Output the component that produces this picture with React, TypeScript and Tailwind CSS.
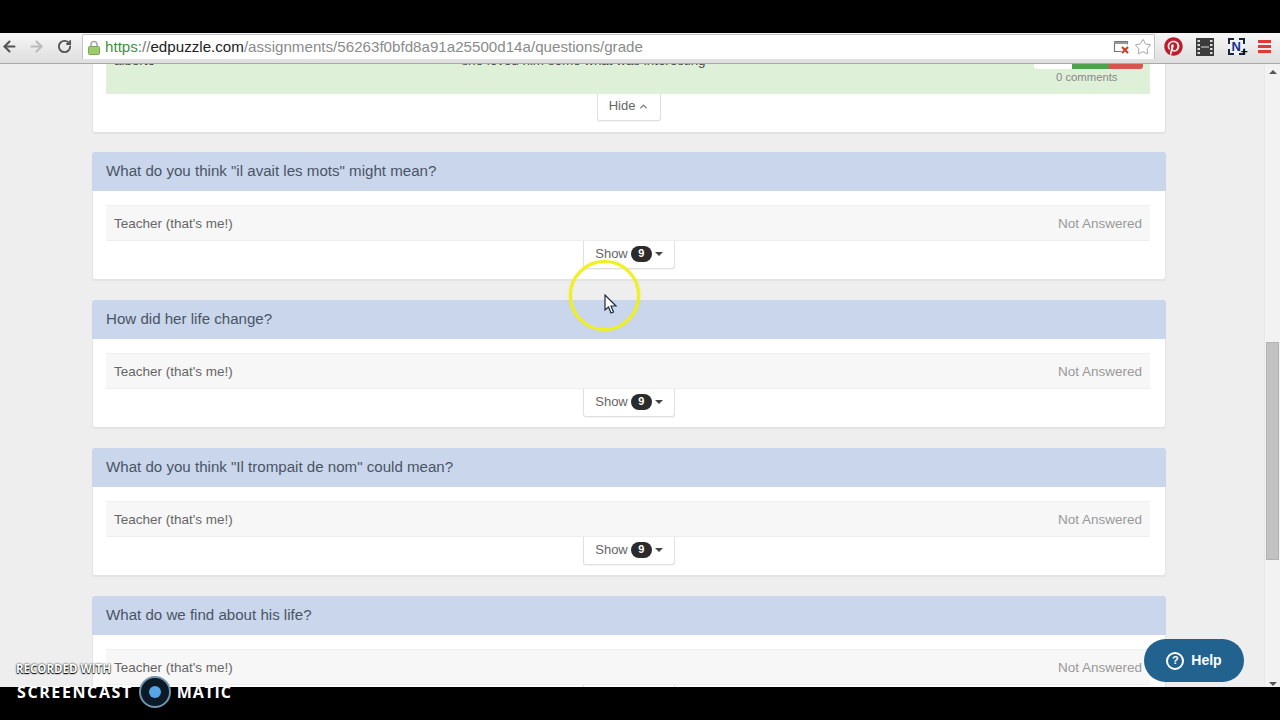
import { ArrowLeft, ArrowRight, RotateCw, Star, ChevronUp } from "lucide-react";
import { FaPinterest } from "react-icons/fa";

const questions = [
  'What do you think "il avait les mots" might mean?',
  "How did her life change?",
  'What do you think "Il trompait de nom" could mean?',
  "What do we find about his life?",
];

function Toolbar() {
  return (
    <div className="flex h-[31px] shrink-0 items-start border-b border-[#a8a8a8] bg-gradient-to-b from-[#f6f6f6] to-[#dedede] pt-[1px]">
      <div className="flex h-[25px] w-[82px] shrink-0 items-center gap-[10px] pl-[1px]">
        <ArrowLeft size={17} strokeWidth={3} className="text-[#555]" />
        <ArrowRight size={17} strokeWidth={3} className="text-[#bbb]" />
        <RotateCw size={15} strokeWidth={3} className="ml-[2px] text-[#555]" />
      </div>
      <div className="flex h-[25px] w-[1073px] shrink-0 items-center rounded-t-[2px] border border-b-0 border-[#c4c4c4] bg-white pr-[2px] pl-[5px] text-[15.15px]">
        <svg width="12" height="15" viewBox="0 0 12 15" className="mr-[5px] shrink-0">
          <path d="M3 7V4.5a3 3 0 0 1 6 0V7" fill="none" stroke="#a9a9a9" strokeWidth="1.6" />
          <rect x="0.5" y="6.5" width="11" height="8" rx="1" fill="#9ccb6a" stroke="#7ea84f" />
        </svg>
        <span className="text-[#3f8f45]">https:</span>
        <span className="text-[#777]">//</span>
        <span className="text-[#222]">edpuzzle.com</span>
        <span className="text-[#8b8b8b]">/assignments/56263f0bfd8a91a25500d14a/questions/grade</span>
        <div className="ml-auto flex items-center gap-[3px]">
          <svg width="18" height="16" viewBox="0 0 18 16">
            <path d="M1.5 2.5h13v3M1.5 2.5v10h7" fill="none" stroke="#777" strokeWidth="1.2" />
            <path d="M1.5 3h13v2h-13z" fill="#999" />
            <path d="M9 8l6 6M15 8l-6 6" stroke="#cf3a22" strokeWidth="2" />
          </svg>
          <Star size={18} strokeWidth={1.2} className="text-[#999]" />
        </div>
      </div>
      <div className="flex h-[25px] flex-1 items-center justify-between pr-[9px] pl-[9px]">
        <FaPinterest size={19} className="text-[#bd1c2b]" />
        <svg width="18" height="18" viewBox="0 0 18 18">
          <rect width="18" height="18" fill="#3c3c3c" />
          <path d="M1.5 2h2.5v2h-2.500zM1.500 6h2.500v2h-2.500zM1.500 10h2.500v2h-2.500zM1.500 14h2.500v2h-2.500zM14 2h2.500v2H14zM14 6h2.500v2H14zM14 10h2.500v2H14zM14 14h2.500v2H14z" fill="#ddd" />
          <path d="M5 9h8" stroke="#ddd" strokeWidth="1" />
        </svg>
        <div className="relative flex h-[17px] w-[17px] items-center justify-center border-2 border-dashed border-[#1d2433] bg-[#eef1f8] text-[13px] leading-none font-bold text-[#12308c]">
          N
          <span className="absolute -right-[5px] -bottom-[5px] text-[12px] leading-none font-bold text-[#111]">+</span>
        </div>
        <div className="flex w-[13px] flex-col gap-[2px]">
          <div className="h-[3px] bg-[#e0393a]" />
          <div className="h-[3px] bg-[#e0393a]" />
          <div className="h-[3px] bg-[#e0393a]" />
        </div>
      </div>
    </div>
  );
}

function FirstCard() {
  return (
    <div className="rounded-b-[3px] border border-t-0 border-[#e2e2e2] bg-white pr-[13px] pb-[11px] pl-[13px] shadow-[0_1px_1px_rgba(0,0,0,0.05)]">
      <div className="mr-[2px] flex h-[50px] justify-between bg-[#dff0d8] pr-[7px] pl-[8px] text-[13.4px] text-[#444]">
        <span className="pt-[7px]">alberto</span>
        <span className="pt-[7px] pr-[22px]">she loved him some what was interesting</span>
        <div className="flex w-[109px] flex-col">
          <div className="mt-[15px] flex h-[10px] w-full overflow-hidden rounded-b-[3px]">
            <div className="w-[38px] bg-white" />
            <div className="w-[37px] bg-[#4ea24f]" />
            <div className="flex-1 bg-[#d9534f]" />
          </div>
          <span className="pt-[1px] pl-[22px] text-[11.3px] leading-[14px] text-[#888]">0 comments</span>
        </div>
      </div>
      <div className="mx-auto flex h-[27px] w-fit items-center gap-[3px] rounded-b-[3px] border border-t-0 border-[#e0e0e0] bg-white px-[11px] pb-[2px] text-[13px] text-[#666] shadow-[0_1px_1px_rgba(0,0,0,0.05)]">
        Hide
        <ChevronUp size={11} strokeWidth={3} className="text-[#777]" />
      </div>
    </div>
  );
}

function QuestionCard({ title }: { title: string }) {
  return (
    <div className="rounded-[3px] border border-[#e4e4e4] bg-white shadow-[0_1px_1px_rgba(0,0,0,0.05)]">
      <div className="-mx-[1px] -mt-[1px] flex h-[39px] items-center rounded-t-[3px] bg-[#c9d6ec] px-[14px] text-[15.1px] text-[#4a5564]">
        {title}
      </div>
      <div className="px-[13px] pt-[14px] pb-[10px]">
        <div className="mr-[2px] flex h-[36px] items-center justify-between border-y border-[#eeeeee] bg-[#f7f7f7] px-[8px] pt-[3px] text-[13.5px]">
          <span className="text-[#666]">Teacher (that's me!)</span>
          <span className="text-[#999]">Not Answered</span>
        </div>
        <div className="mx-auto flex h-[28px] w-fit items-center gap-[3px] rounded-b-[3px] border border-t-0 border-[#e0e0e0] bg-white px-[11px] pb-[2px] text-[13px] text-[#666] shadow-[0_1px_1px_rgba(0,0,0,0.05)]">
          Show
          <span className="flex h-[16px] w-[21px] items-center justify-center rounded-full bg-[#2b2b2b] text-[11px] font-bold text-white">
            9
          </span>
          <span className="h-0 w-0 border-x-[4px] border-t-[4px] border-x-transparent border-t-[#444]" />
        </div>
      </div>
    </div>
  );
}

function Scrollbar() {
  return (
    <div className="flex w-[16px] shrink-0 flex-col items-center border-l border-[#e8e8e8] bg-[#f2f2f2]">
      <span className="mt-[6px] h-0 w-0 border-x-[4px] border-b-[4px] border-x-transparent border-b-[#555]" />
      <div className="mt-[268px] h-[218px] w-[13px] border border-[#b2b2b2] bg-[#c2c2c2]" />
      <span className="mt-auto mb-[1px] h-0 w-0 border-x-[4px] border-t-[4px] border-x-transparent border-t-[#555]" />
    </div>
  );
}

function Watermark() {
  return (
    <div className="absolute bottom-[18px] left-[16px] font-['Open_Sans',sans-serif] text-white">
      <div className="text-[11.5px] leading-[14px] font-bold [text-shadow:0_0_2px_#000,0_1px_1px_#000]">
        RECORDED WITH
      </div>
      <div className="mt-[6px] flex items-center pl-[1px] text-[16px] leading-[20px] font-bold tracking-[1.6px]">
        SCREENCAST
        <svg width="36" height="36" viewBox="0 0 36 36" className="mx-[4px] -my-[8px]">
          <circle cx="18" cy="18" r="15" fill="#0b1a26" stroke="#6f93ad" strokeWidth="2" />
          <circle cx="18" cy="18" r="6" fill="#56a5e6" />
        </svg>
        <span className="tracking-[0.8px]">MATIC</span>
      </div>
    </div>
  );
}

export default function App() {
  return (
    <div className="relative flex h-[720px] w-[1280px] flex-col overflow-hidden bg-black font-['Liberation_Sans',Arial,sans-serif]">
      <div className="h-[33px] shrink-0 bg-black" />
      <Toolbar />
      <div className="flex h-[623px] shrink-0 overflow-hidden bg-[#eeeeee]">
        <div className="flex flex-1 flex-col gap-[20px] overflow-hidden pr-[98px] pl-[92px]">
          <div className="-mt-[20px] -mb-[1px]">
            <FirstCard />
          </div>
          {questions.map((q) => (
            <QuestionCard key={q} title={q} />
          ))}
        </div>
        <Scrollbar />
      </div>
      <div className="h-[33px] shrink-0 bg-black" />

      {/* recorder overlays */}
      <div className="absolute top-[260px] left-[569px] h-[71px] w-[71px] rounded-full border-[3px] border-[#f0f020] shadow-[0_0_2px_#e8e830]" />
      <svg width="14" height="21" viewBox="0 0 14 21" className="absolute top-[294px] left-[604px]">
        <path d="M1 1v15l3.5-3 2.5 6 2.5-1-2.500-6H12z" fill="#fff" stroke="#1c2b44" strokeWidth="1.2" />
      </svg>
      <div className="absolute top-[639px] left-[1144px] flex h-[43px] w-[100px] items-center justify-center gap-[7px] rounded-full bg-[#21628f] text-[14px] font-bold text-white">
        <span className="flex h-[18px] w-[18px] items-center justify-center rounded-full border-2 border-white text-[11px] leading-none">
          ?
        </span>
        Help
      </div>
      <Watermark />
    </div>
  );
}
